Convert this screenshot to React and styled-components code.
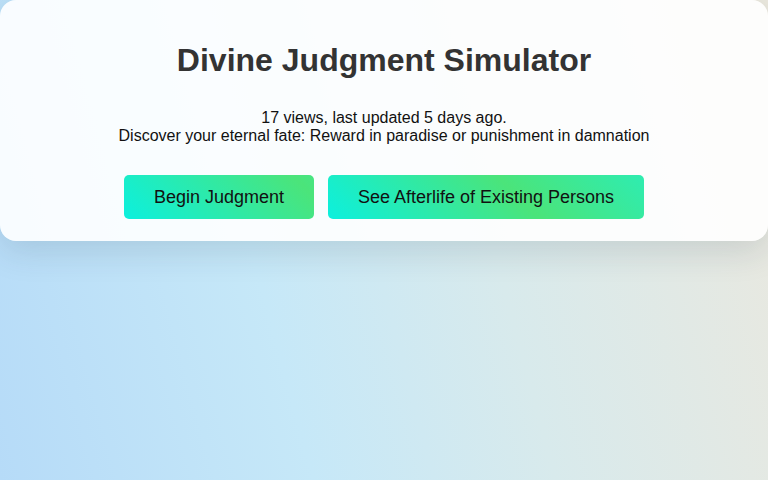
import React from "react";
import styled, { createGlobalStyle } from "styled-components";

const GlobalStyle = createGlobalStyle`
  html, body {
    margin: 0;
    padding: 0;
    min-height: 100%;
  }
  body {
    min-height: 100vh;
    font-family: "Liberation Sans", Arial, sans-serif;
    background: linear-gradient(75deg, #b6dbf8 0%, #c6e8f8 35%, #d8eaec 62%, #ebe8de 100%);
    background-attachment: fixed;
  }
`;

const Card = styled.main`
  box-sizing: border-box;
  background: rgba(255, 255, 255, 0.9);
  border-radius: 16px;
  box-shadow: 0 10px 34px rgba(30, 50, 70, 0.14);
  padding: 42px 20px 22px;
  display: flex;
  flex-direction: column;
  align-items: center;
  text-align: center;
`;

const Title = styled.h1`
  margin: 0 0 30px;
  font-size: 32px;
  font-weight: 700;
  color: #333333;
  line-height: 37px;
`;

const Meta = styled.p`
  margin: 0;
  font-size: 16px;
  line-height: 18px;
  color: #111111;
`;

const Actions = styled.div`
  display: flex;
  gap: 14px;
  justify-content: center;
  margin-top: 30px;
`;

const ActionButton = styled.button`
  height: 44px;
  padding: 0 30px;
  border: none;
  border-radius: 5px;
  font-family: "Liberation Sans", Arial, sans-serif;
  font-size: 18px;
  color: #111111;
  background: linear-gradient(45deg, #0cf0de 0%, #4be47a 50%, #22f0c8 100%);
  background-size: 380px 100%;
  background-repeat: no-repeat;
  background-color: #3eeaa8;
  cursor: pointer;
`;

export default function App() {
  return (
    <>
      <GlobalStyle />
      <Card>
        <Title>Divine Judgment Simulator</Title>
        <Meta>17 views, last updated 5 days ago.</Meta>
        <Meta>Discover your eternal fate: Reward in paradise or punishment in damnation</Meta>
        <Actions>
          <ActionButton>Begin Judgment</ActionButton>
          <ActionButton>See Afterlife of Existing Persons</ActionButton>
        </Actions>
      </Card>
    </>
  );
}
